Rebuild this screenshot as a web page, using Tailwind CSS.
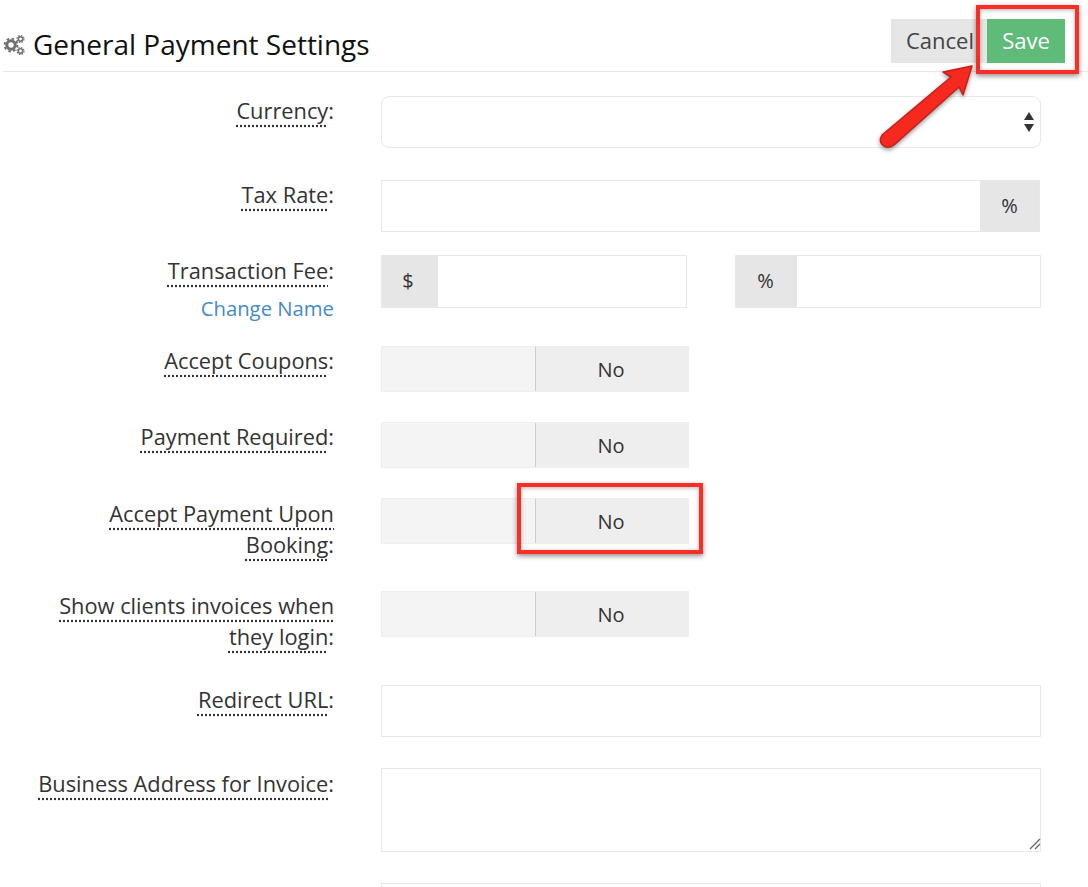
<!DOCTYPE html>
<html lang="en">
	<head>
		<meta charset="UTF-8" />
		<meta name="viewport" content="width=device-width, initial-scale=1.0" />
		<script src="https://cdn.jsdelivr.net/npm/@tailwindcss/browser@4"></script>
		<title>General Payment Settings</title>
	</head>
	<body class="bg-white">
		<div class="relative w-[1088px] h-[887px] overflow-hidden font-['Open_Sans',sans-serif] text-[20px] leading-[31px] text-[#333]">
			<!-- Header -->
			<header class="ml-[3px] h-[72px] border-b border-[#e8e8e8] flex justify-between">
				<div class="flex items-center gap-[8px] h-[90px] pb-[1px]">
					<svg class="w-[22px] h-[22px]" viewBox="0 0 22 22" fill="none" stroke="#707070">
						<circle cx="8" cy="11" r="4.2" stroke-width="3" />
						<circle cx="8" cy="11" r="6.4" stroke-width="2" stroke-dasharray="2.5 2.5" />
						<circle cx="17.5" cy="5" r="2.2" stroke-width="1.5" />
						<circle cx="17.5" cy="5" r="3.5" stroke-width="1.2" stroke-dasharray="1.5 1.25" />
						<circle cx="17.5" cy="17" r="2.2" stroke-width="1.5" />
						<circle cx="17.5" cy="17" r="3.5" stroke-width="1.2" stroke-dasharray="1.5 1.25" />
					</svg>
					<h1 class="text-[28px] leading-[36px] text-[#111] -mt-[2px]">General Payment Settings</h1>
				</div>
				<div class="flex items-start pt-[19px] pr-[23px]">
					<button class="w-[96px] h-[44px] bg-[#e6e6e6] text-[22px] text-[#444] pl-[15px] pb-[2px] text-left">Cancel</button>
					<button class="w-[78px] h-[44px] bg-[#5fbb78] text-white text-[22px] font-medium text-center pb-[2px]">Save</button>
				</div>
			</header>

			<!-- Currency -->
			<div class="flex mt-[24px]">
				<label class="w-[334px] pl-[36px] text-right text-[21.8px] -mt-[1px]"><span class="underline decoration-dotted underline-offset-[6px]">Currency</span>:</label>
				<div class="relative ml-[47px] w-[660px] h-[52px] border border-[#e8e8e8] rounded-[8px]">
					<svg class="absolute right-[6px] top-[15px] w-[10px] h-[20px]" viewBox="0 0 10 20" fill="#333">
						<path d="M5 0 L10 8 H0 Z M0 12 H10 L5 20 Z" />
					</svg>
				</div>
			</div>

			<!-- Tax rate -->
			<div class="flex mt-[32px]">
				<label class="w-[334px] pl-[36px] text-right text-[21.8px] -mt-[1px]"><span class="underline decoration-dotted underline-offset-[6px]">Tax Rate</span>:</label>
				<div class="flex ml-[47px] w-[659px] h-[52px] border border-[#e8e8e8]">
					<input class="flex-1 min-w-0" type="text" />
					<div class="w-[59px] bg-[#e6e6e6] flex items-center justify-center pb-[2px]">%</div>
				</div>
			</div>

			<!-- Transaction fee -->
			<div class="flex mt-[23px]">
				<div class="w-[334px] pl-[36px] text-right">
					<label class="block text-[21.8px]"><span class="underline decoration-dotted underline-offset-[6px]">Transaction Fee</span>:</label>
					<a class="block mt-[7px] text-[20.3px] text-[#428bca]" href="#">Change Name</a>
				</div>
				<div class="flex ml-[47px] gap-[48px]">
					<div class="flex w-[306px] h-[53px] border border-[#e8e8e8]">
						<div class="w-[56px] bg-[#e6e6e6] flex items-center justify-center pb-[2px] pr-[4px]">$</div>
						<input class="flex-1 min-w-0" type="text" />
					</div>
					<div class="flex w-[306px] h-[53px] border border-[#e8e8e8]">
						<div class="w-[61px] bg-[#e6e6e6] flex items-center justify-center pb-[2px] pr-[2px]">%</div>
						<input class="flex-1 min-w-0" type="text" />
					</div>
				</div>
			</div>

			<!-- Accept coupons -->
			<div class="flex mt-[22px]">
				<label class="w-[334px] pl-[36px] text-right text-[21.8px] -mt-[1px]"><span class="underline decoration-dotted underline-offset-[6px]">Accept Coupons</span>:</label>
				<div class="flex ml-[47px] w-[308px] h-[46px] border border-[#eee]">
					<div class="w-[154px] bg-[#f4f4f4] border-r border-[#ccc]"></div>
					<div class="flex-1 bg-[#eee] flex items-center justify-center pr-[2px]">No</div>
				</div>
			</div>

			<!-- Payment required -->
			<div class="flex mt-[30px]">
				<label class="w-[334px] pl-[36px] text-right text-[21.8px] -mt-[1px]"><span class="underline decoration-dotted underline-offset-[6px]">Payment Required</span>:</label>
				<div class="flex ml-[47px] w-[308px] h-[46px] border border-[#eee]">
					<div class="w-[154px] bg-[#f4f4f4] border-r border-[#ccc]"></div>
					<div class="flex-1 bg-[#eee] flex items-center justify-center pr-[2px]">No</div>
				</div>
			</div>

			<!-- Accept payment upon booking -->
			<div class="flex mt-[30px]">
				<label class="w-[334px] pl-[36px] text-right text-[21.8px]"><span class="underline decoration-dotted underline-offset-[6px]">Accept Payment Upon Booking</span>:</label>
				<div class="flex ml-[47px] w-[308px] h-[46px] border border-[#eee]">
					<div class="w-[154px] bg-[#f4f4f4] border-r border-[#ccc]"></div>
					<div class="flex-1 bg-[#eee] flex items-center justify-center pr-[2px]">No</div>
				</div>
			</div>

			<!-- Show clients invoices -->
			<div class="flex mt-[31px]">
				<label class="w-[334px] pl-[36px] text-right text-[21.8px] -mt-[1px]"><span class="underline decoration-dotted underline-offset-[6px]">Show clients invoices when they login</span>:</label>
				<div class="flex ml-[47px] w-[308px] h-[46px] border border-[#eee]">
					<div class="w-[154px] bg-[#f4f4f4] border-r border-[#ccc]"></div>
					<div class="flex-1 bg-[#eee] flex items-center justify-center pr-[2px]">No</div>
				</div>
			</div>

			<!-- Redirect url -->
			<div class="flex mt-[33px]">
				<label class="w-[334px] pl-[36px] text-right text-[21.8px] -mt-[1px]"><span class="underline decoration-dotted underline-offset-[6px]">Redirect URL</span>:</label>
				<input class="ml-[47px] w-[660px] h-[52px] border border-[#e8e8e8]" type="text" />
			</div>

			<!-- Business address -->
			<div class="flex mt-[31px]">
				<label class="w-[334px] pl-[36px] text-right text-[21.8px]"><span class="underline decoration-dotted underline-offset-[6px]">Business Address for Invoice</span>:</label>
				<div class="relative ml-[47px] w-[660px] h-[84px]">
					<textarea class="block w-full h-full resize-none border border-[#e8e8e8]"></textarea>
					<svg class="absolute right-0 bottom-[2px] w-[12px] h-[12px]" viewBox="0 0 12 12" stroke="#666" stroke-width="1.3">
						<path d="M1 11 L11 1 M6 11 L11 6" />
					</svg>
				</div>
			</div>

			<div class="flex mt-[31px]">
				<div class="ml-[381px] w-[660px] h-[52px] border border-[#e8e8e8]"></div>
			</div>

			<!-- Annotations -->
			<div class="absolute left-[976px] top-[5px] w-[103px] h-[69px] border-[4px] border-[#fb2d24] shadow-[0_2px_5px_rgba(0,0,0,0.45),inset_0_1px_4px_rgba(0,0,0,0.3)]"></div>
			<div class="absolute left-[517px] top-[483px] w-[186px] h-[71px] border-[4px] border-[#fb2d24] shadow-[0_2px_5px_rgba(0,0,0,0.45),inset_0_1px_4px_rgba(0,0,0,0.3)]"></div>
			<svg class="absolute left-[870px] top-[55px] w-[115px] h-[100px] drop-shadow-[0_2px_2px_rgba(0,0,0,0.4)]" viewBox="0 0 115 100">
				<path d="M12 80 Q8 87 14 91 Q19 94 24 90 L89 32 L93 40 L102 11 L73 17 L81 22 Z" fill="#f6291f" stroke="#c4211a" stroke-width="1.5" stroke-linejoin="round" />
			</svg>
		</div>
	</body>
</html>
